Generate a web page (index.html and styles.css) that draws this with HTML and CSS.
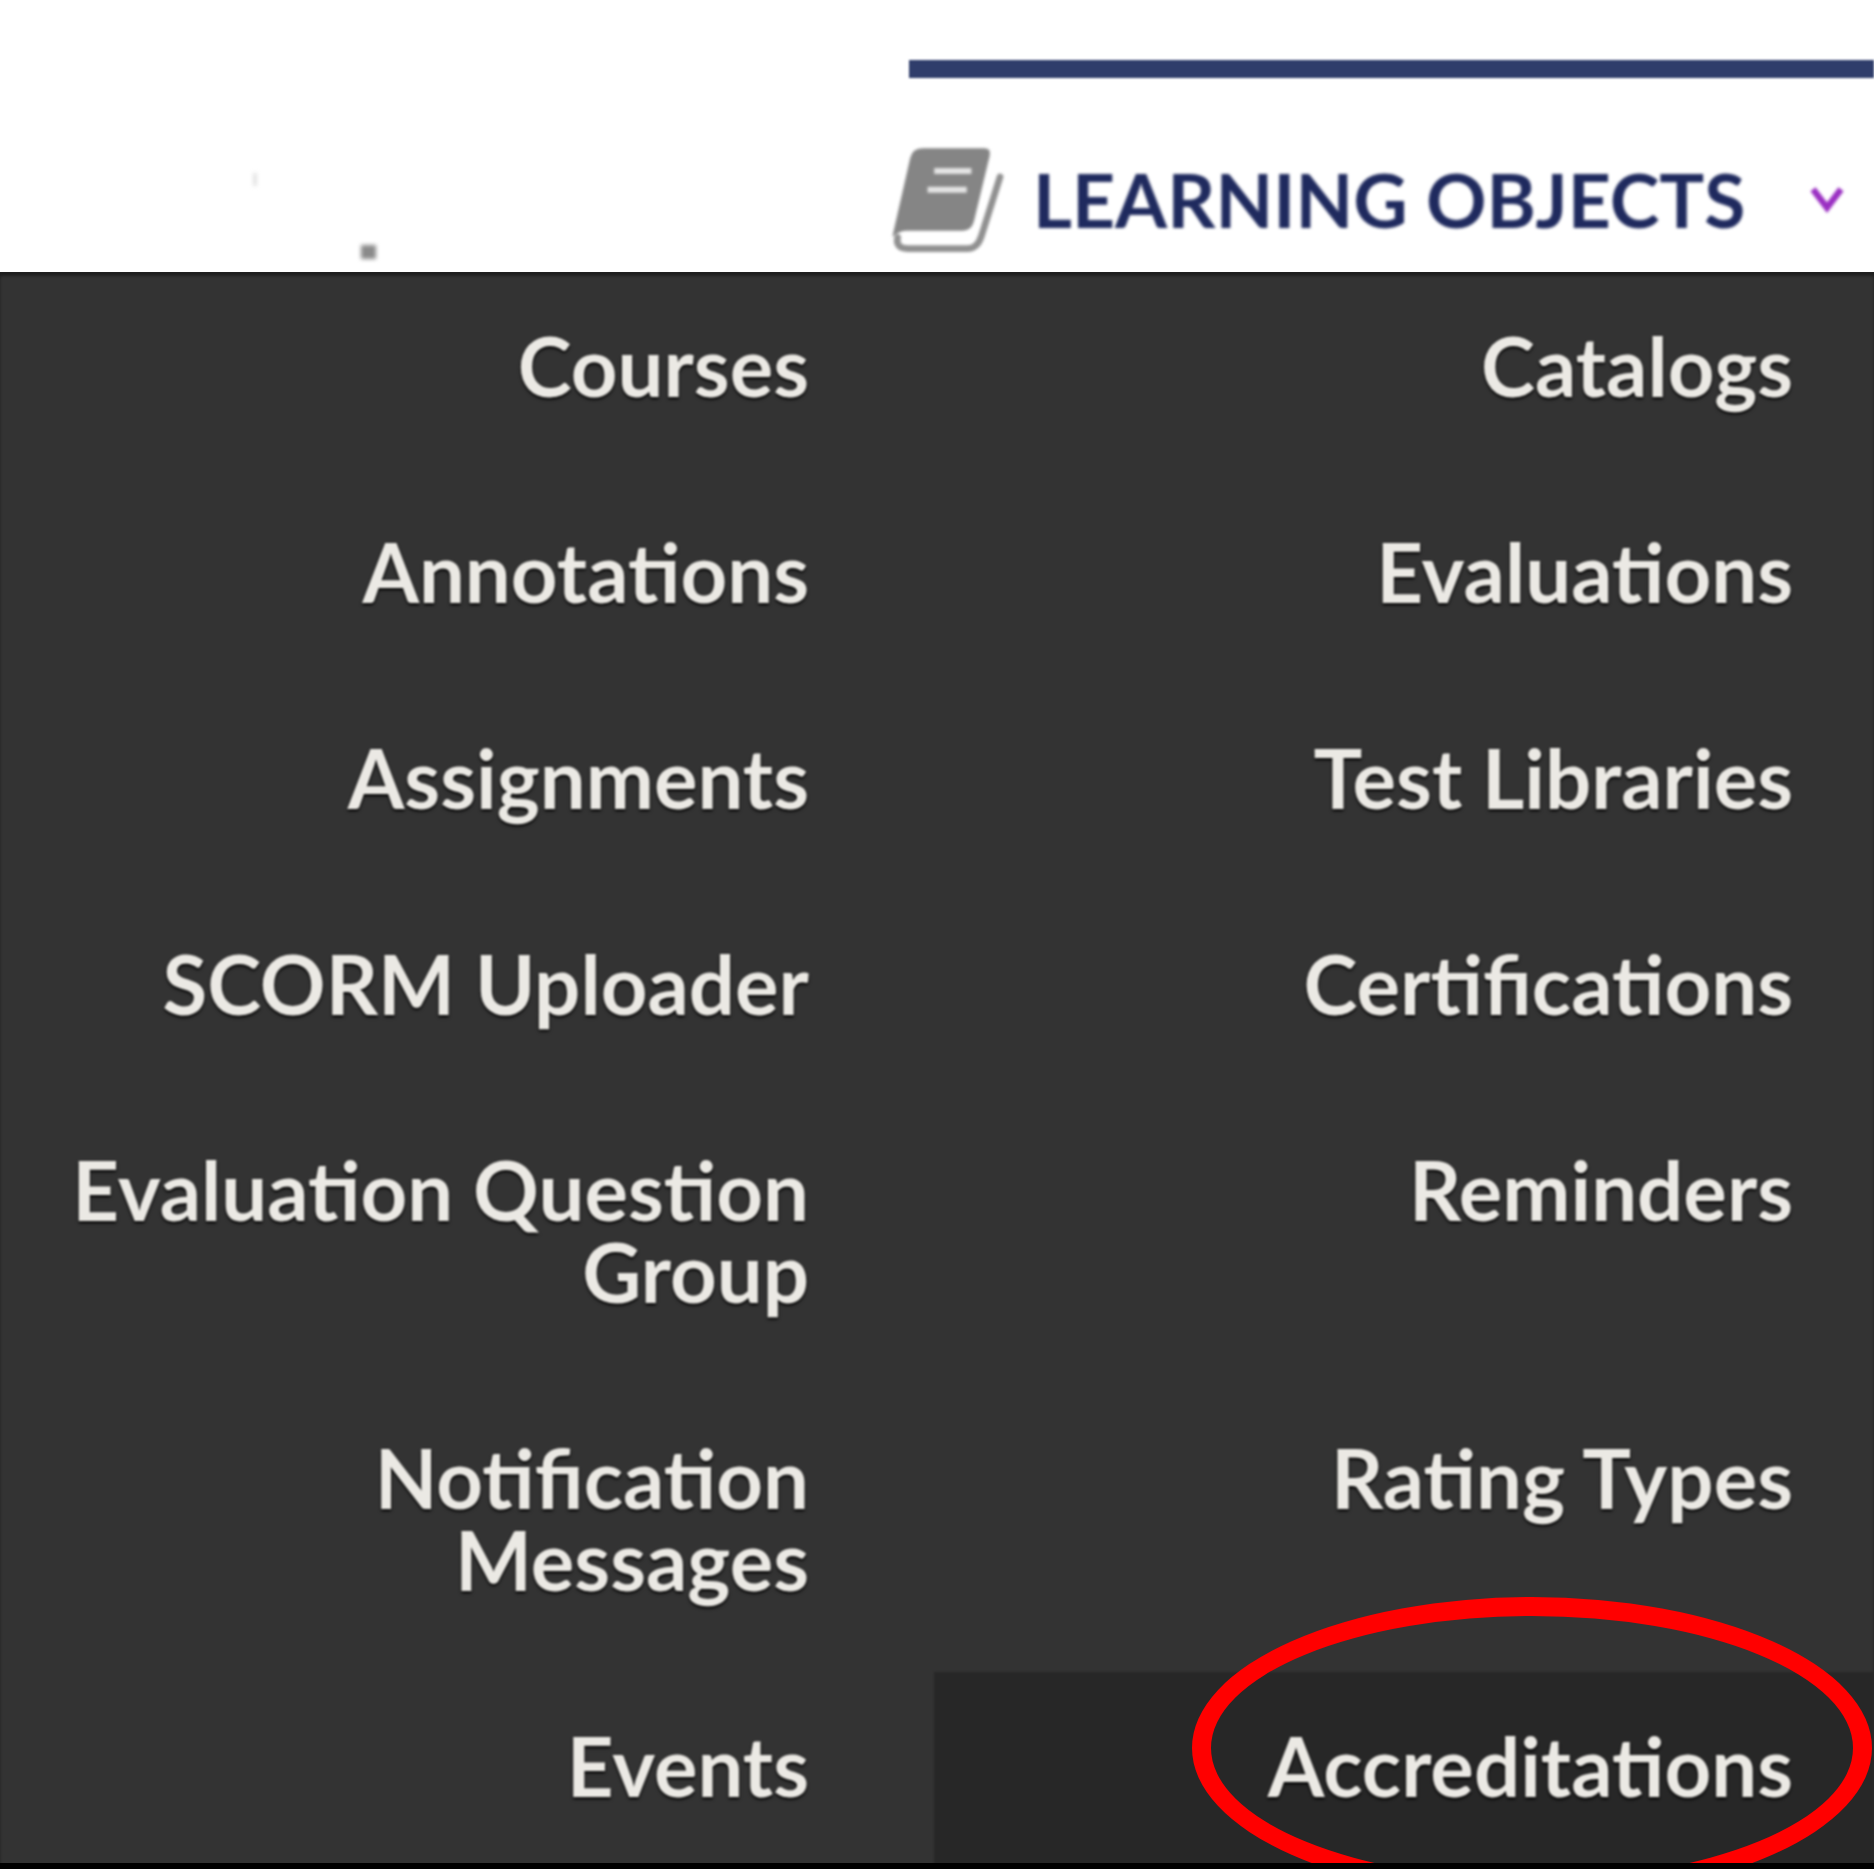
FILE: index.html
```html
<!DOCTYPE html>
<html lang="en">
<head>
    <meta charset="UTF-8">
    <title>Learning Objects menu</title>
    <link rel="stylesheet" href="styles.css">
</head>
<body>
    <header class="top">
        <span class="speck speck-a"></span>
        <span class="speck speck-b"></span>
        <div class="top-rule"></div>
        <div class="nav-item">
            <svg class="book-icon" viewBox="90 40 350 325" aria-hidden="true">
                <path class="book-body" d="M190 50H372Q394 50 389 72L342 268Q335 298 308 298H140Q118 298 96 316L150 78Q156 50 190 50Z"/>
                <path class="book-foot" d="M112 318Q104 350 142 352H322Q352 352 364 314L420 136"/>
                <path class="book-lines" d="M222 118H334M202 175H320"/>
            </svg>
            <span class="nav-label">LEARNING OBJECTS</span>
            <svg class="chevron" viewBox="0 0 32 26" aria-hidden="true">
                <path d="M3 4L16 21L29 4"/>
            </svg>
        </div>
    </header>

    <nav class="menu">
        <a class="menu-link">Courses</a>
        <a class="menu-link">Catalogs</a>
        <a class="menu-link">Annotations</a>
        <a class="menu-link">Evaluations</a>
        <a class="menu-link">Assignments</a>
        <a class="menu-link">Test Libraries</a>
        <a class="menu-link">SCORM Uploader</a>
        <a class="menu-link">Certifications</a>
        <a class="menu-link">Evaluation Question Group</a>
        <a class="menu-link">Reminders</a>
        <a class="menu-link">Notification Messages</a>
        <a class="menu-link">Rating Types</a>
        <a class="menu-link">Events</a>
        <a class="menu-link active">Accreditations</a>
        <div class="red-circle"></div>
    </nav>
</body>
</html>
```

FILE: styles.css
```css
html, body {
    margin: 0;
    height: 100%;
}

body {
    display: flex;
    flex-direction: column;
    height: 1863px;
    background: #000;
    font-family: Lato, "Liberation Sans", sans-serif;
    overflow: hidden;
}

.top {
    position: relative;
    height: 272px;
    flex: none;
    background: #fff;
    overflow: hidden;
}

.top-rule {
    height: 18px;
    margin: 60px 0 0 909px;
    background: #2f3d6b;
    filter: blur(0.8px);
}

.nav-item {
    display: flex;
    align-items: center;
    height: 108px;
    margin: 67px 0 0 890px;
    filter: blur(1.4px);
}

.book-icon {
    width: 117px;
    height: 108px;
    flex: none;
}

.book-body {
    fill: #858585;
}

.book-foot {
    fill: none;
    stroke: #909090;
    stroke-width: 20;
    stroke-linecap: round;
}

.book-lines {
    fill: none;
    stroke: #e4e4e4;
    stroke-width: 18;
}

.nav-label {
    margin-left: 26px;
    font-size: 75px;
    font-weight: 700;
    line-height: 72px;
    color: #1f2a5e;
    white-space: nowrap;
}

.chevron {
    width: 36px;
    height: 28px;
    margin-left: 64px;
    flex: none;
}

.chevron path {
    fill: none;
    stroke: #9a2fc2;
    stroke-width: 6;
}

.speck {
    position: absolute;
    background: #8a8a8a;
    filter: blur(2px);
}

.speck-a {
    left: 254px;
    top: 173px;
    width: 2px;
    height: 13px;
    background: #c8c8c8;
}

.speck-b {
    left: 361px;
    top: 245px;
    width: 15px;
    height: 14px;
}

.menu {
    position: relative;
    flex: 1;
    display: grid;
    grid-template-columns: 934px 940px;
    align-content: start;
    background: #333;
    box-shadow: inset 0 4px 3px #1f1f1f;
    overflow: hidden;
}

.menu-link {
    display: block;
    padding: 53px 125px 71px 60px;
    font-size: 81.5px;
    font-weight: 700;
    line-height: 82px;
    text-align: right;
    color: #ebe9e4;
    text-shadow: 0 2px 3px #000;
    filter: blur(1.2px);
}

.menu-link:nth-child(even) {
    padding-right: 81px;
}

.menu-link.active {
    background: #272727;
}

.red-circle {
    position: absolute;
    left: 1192px;
    top: 1325px;
    width: 642px;
    height: 264px;
    border: 19px solid #f00;
    border-radius: 50%;
}
```
